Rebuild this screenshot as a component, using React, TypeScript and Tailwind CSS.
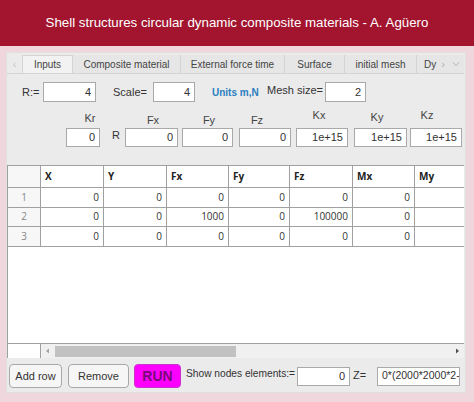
import React from "react";

const cols = [
  { k: "X", w: "w-[63px]" },
  { k: "Y", w: "w-[63px]" },
  { k: "Fx", w: "w-[62px]" },
  { k: "Fy", w: "w-[61px]" },
  { k: "Fz", w: "w-[63px]" },
  { k: "Mx", w: "w-[62px]" },
  { k: "My", w: "w-[62px]" },
];

const rows = [
  ["0", "0", "0", "0", "0", "0", ""],
  ["0", "0", "1000", "0", "100000", "0", ""],
  ["0", "0", "0", "0", "0", "0", ""],
];

function Field({ v, w, h = "h-[20px]" }: { v: string; w: string; h?: string }) {
  return (
    <div
      className={`${w} ${h} shrink-0 bg-white border border-[#a9a9a9] flex items-center justify-end pr-[4px] text-[11px] text-[#333] overflow-hidden whitespace-nowrap`}
    >
      {v}
    </div>
  );
}

export default function App() {
  return (
    <div className="w-[474px] h-[402px] bg-[#efd7dd] flex flex-col overflow-hidden font-['Liberation_Sans',Arial,sans-serif] text-[#333]">
      <div className="h-[46px] shrink-0 bg-[#a3142f] flex items-center justify-center text-white text-[13.3px]">
        Shell structures circular dynamic composite materials - A. Agüero
      </div>
      <div className="flex-1 min-h-0 pl-[6px] pr-[8px] pt-[6px] pb-[9px] flex">
        <div className="flex-1 min-w-0 overflow-hidden bg-[#ebebeb] flex flex-col border border-[#e0e0e0]">
          {/* Tabs */}
          <div className="mt-[2px] h-[19px] flex items-stretch text-[10px] text-[#444] border-b border-[#d4d4d4] mr-[1px]">
            <div className="w-[15px] shrink-0 flex items-center justify-center text-[#c8c8c8] text-[11px]">‹</div>
            <div className="w-[51px] shrink-0 bg-[#f2f2f2] border-x border-t border-[#d4d4d4] flex items-center justify-center">Inputs</div>
            <div className="w-[108px] shrink-0 bg-[#e6e6e6] border-r border-[#d4d4d4] flex items-center justify-center">Composite material</div>
            <div className="w-[104px] shrink-0 bg-[#e6e6e6] border-r border-[#d4d4d4] flex items-center justify-center">External force time</div>
            <div className="w-[60px] shrink-0 bg-[#e6e6e6] border-r border-[#d4d4d4] flex items-center justify-center">Surface</div>
            <div className="w-[72px] shrink-0 bg-[#e6e6e6] border-r border-[#d4d4d4] flex items-center justify-center">initial mesh</div>
            <div className="flex-1 bg-[#e6e6e6] flex items-center pl-[7px] gap-[5px]">
              <span>Dy</span>
              <span className="text-[#b0b0b0] text-[11px]">›</span>
              <svg width="8" height="6" viewBox="0 0 8 6" className="ml-[2px]">
                <path d="M1 1.5 L4 4.5 L7 1.5" fill="none" stroke="#b0b0b0" strokeWidth="1" />
              </svg>
            </div>
          </div>

          {/* Row 1 */}
          <div className="mt-[8px] flex items-center pl-[15px] text-[11px]">
            <span className="w-[21px]">R:=</span>
            <Field v="4" w="w-[53px]" />
            <span className="ml-[17px] w-[40px]">Scale=</span>
            <Field v="4" w="w-[42px]" />
            <span className="ml-[17px] w-[55px] text-[10px] font-bold text-[#2a7fc0]">Units m,N</span>
            <span className="w-[58px] -mt-[4px]">Mesh size=</span>
            <Field v="2" w="w-[41px]" />
          </div>

          {/* Labels */}
          <div className="mt-[5px] h-[20px] flex items-start pl-[68px] text-[11px] text-[#444]">
            <span className="w-[30px] text-center mt-[3px]">Kr</span>
            <span className="ml-[33px] w-[30px] text-center mt-[5px]">Fx</span>
            <span className="ml-[26px] w-[30px] text-center mt-[5px]">Fy</span>
            <span className="ml-[18px] w-[30px] text-center mt-[5px]">Fz</span>
            <span className="ml-[32px] w-[30px] text-center mt-[0px]">Kx</span>
            <span className="ml-[28px] w-[30px] text-center mt-[2px]">Ky</span>
            <span className="ml-[20px] w-[30px] text-center mt-[0px]">Kz</span>
          </div>

          {/* Row 2 */}
          <div className="mt-[1px] flex items-center pl-[59px] text-[11px]">
            <Field v="0" w="w-[34px]" h="h-[19px]" />
            <span className="ml-[12px] w-[13px] -mt-[4px]">R</span>
            <Field v="0" w="w-[53px]" h="h-[19px]" />
            <div className="w-[4px]" />
            <Field v="0" w="w-[51px]" h="h-[19px]" />
            <div className="w-[6px]" />
            <Field v="0" w="w-[52px]" h="h-[19px]" />
            <div className="w-[5px]" />
            <Field v="1e+15" w="w-[52px]" h="h-[19px]" />
            <div className="w-[6px]" />
            <Field v="1e+15" w="w-[53px]" h="h-[19px]" />
            <div className="w-[3px]" />
            <Field v="1e+15" w="w-[52px]" h="h-[19px]" />
          </div>

          {/* Table */}
          <div className="mt-[18px] h-[193px] shrink-0 mr-[1px] flex flex-col bg-white border-t border-l border-[#a0a0a0] overflow-hidden font-['Open_Sans',sans-serif] text-[10px]">
            <div className="flex-1 flex flex-col overflow-hidden">
              <div className="flex h-[22px] shrink-0">
                <div className="w-[33px] shrink-0 border-r border-b border-[#a0a0a0] bg-[#f7f7f7]" />
                {cols.map((c) => (
                  <div key={c.k} className={`${c.w} shrink-0 border-r border-b border-[#a0a0a0] flex items-center pl-[4px] font-bold text-[#222]`}>
                    {c.k}
                  </div>
                ))}
              </div>
              {rows.map((r, i) => (
                <div key={i} className="flex h-[19.5px] shrink-0">
                  <div className="w-[33px] shrink-0 border-r border-b border-[#a0a0a0] bg-[#f7f7f7] flex items-center justify-center text-[#888]">
                    {i + 1}
                  </div>
                  {r.map((v, j) => (
                    <div key={j} className={`${cols[j].w} shrink-0 border-r border-b border-[#a0a0a0] flex items-center justify-end pr-[4px] text-[#333]`}>
                      {v}
                    </div>
                  ))}
                </div>
              ))}
            </div>
            <div className="h-[15px] shrink-0 flex border-t border-[#a0a0a0]">
              <div className="w-[33px] shrink-0 border-r border-[#a0a0a0] bg-white" />
              <div className="flex-1 min-w-0 bg-[#f0f0f0] flex items-center">
                <svg width="14" height="14" viewBox="0 0 14 14" className="shrink-0">
                  <path d="M8 4.5 L5 7 L8 9.5 Z" fill="#a3a3a3" />
                </svg>
                <div className="w-[181px] h-[11px] bg-[#c1c1c1] shrink-0" />
                <div className="flex-1" />
                <svg width="14" height="14" viewBox="0 0 14 14" className="shrink-0">
                  <path d="M6 4.5 L9 7 L6 9.5 Z" fill="#505050" />
                </svg>
              </div>
            </div>
          </div>

          {/* Bottom row */}
          <div className="mt-[6px] flex items-center pl-[2px] text-[11px]">
            <button className="w-[53px] h-[24px] shrink-0 rounded-[4px] border border-[#a8a8a8] bg-[#f6f6f6] text-[11px] text-[#333]">Add row</button>
            <button className="ml-[6px] w-[61px] h-[24px] shrink-0 rounded-[4px] border border-[#a8a8a8] bg-[#f6f6f6] text-[11px] text-[#333]">Remove</button>
            <button className="ml-[5px] w-[47px] h-[24px] shrink-0 rounded-[4px] border border-[#cc33cc] bg-[#ff00ff] text-[14px] font-bold text-[#7a0a7a]">RUN</button>
            <span className="ml-[5px] w-[111px] shrink-0 -mt-[4px] whitespace-nowrap text-[10.2px]">Show nodes elements:=</span>
            <Field v="0" w="w-[53px]" h="h-[19px]" />
            <span className="ml-[3px] w-[24px] shrink-0 -mt-[2px]">Z=</span>
            <div className="w-[83px] h-[19px] shrink-0 bg-white border border-[#a9a9a9] flex items-center pl-[4px] text-[10.5px] text-[#333] overflow-hidden whitespace-nowrap">
              0*(2000*2000*2-
            </div>
          </div>
        </div>
      </div>
    </div>
  );
}
